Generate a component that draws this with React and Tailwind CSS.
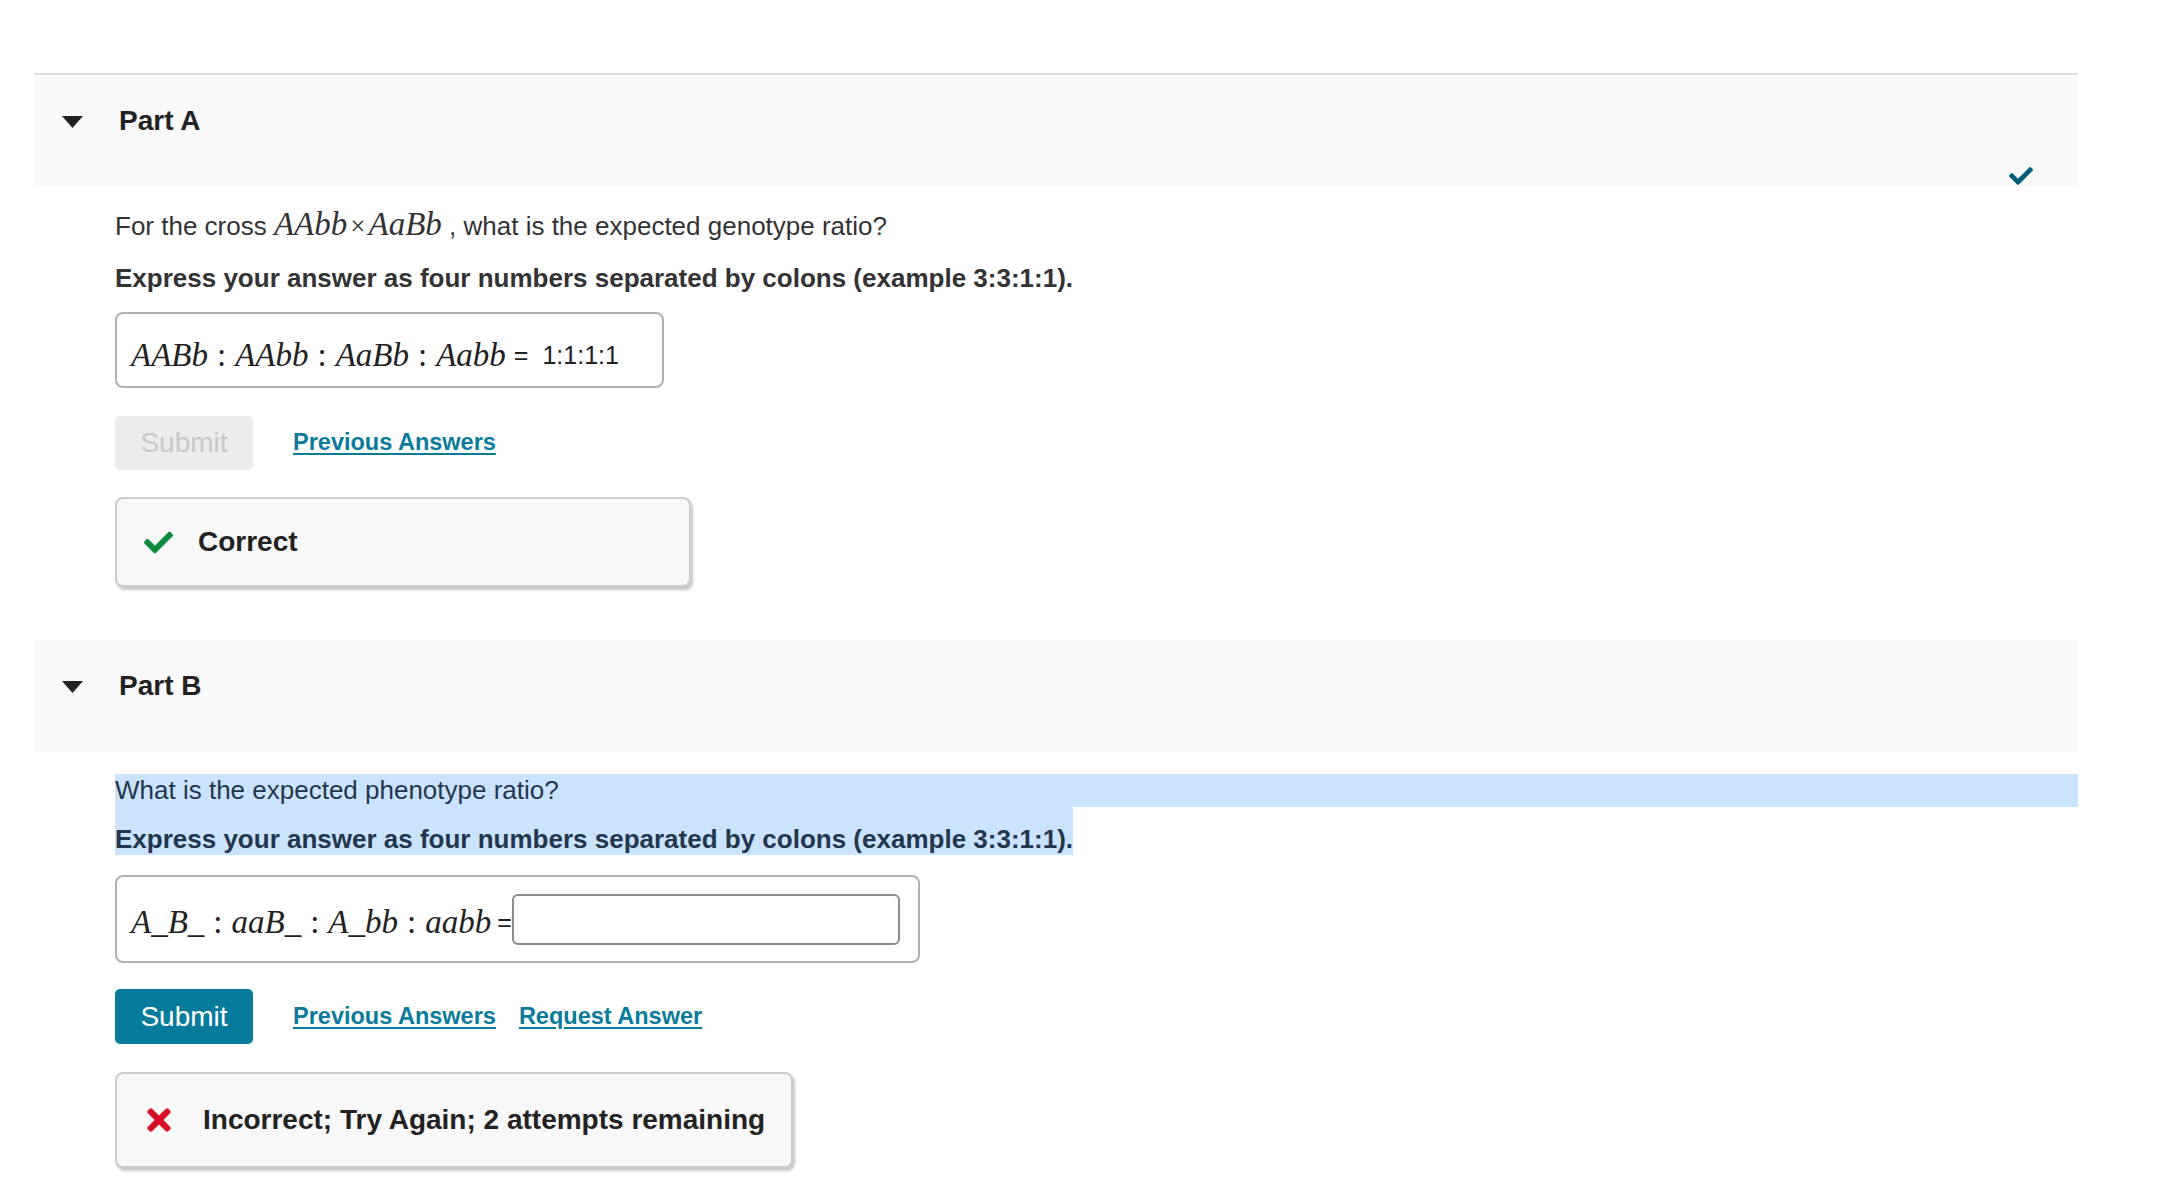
const CHECK_PATH =
  "M173.898 439.404l-166.4-166.4c-9.997-9.997-9.997-26.206 0-36.204l36.203-36.204c9.997-9.998 26.207-9.998 36.204 0L192 312.69 432.095 72.596c9.997-9.997 26.207-9.997 36.204 0l36.203 36.204c9.997 9.997 9.997 26.206 0 36.204l-294.4 294.401c-9.998 9.997-26.207 9.997-36.204-.001z"

const TIMES_PATH =
  "M242.72 256l100.07-100.07c12.28-12.28 12.28-32.19 0-44.48l-22.24-22.24c-12.28-12.28-32.19-12.28-44.48 0L176 189.28 75.930 89.21c-12.28-12.28-32.19-12.28-44.48 0L9.21 111.45c-12.28 12.28-12.28 32.19 0 44.48L109.28 256 9.21 356.07c-12.28 12.28-12.28 32.19 0 44.48l22.24 22.24c12.28 12.28 32.2 12.28 44.48 0L176 322.72l100.07 100.07c12.28 12.28 32.2 12.28 44.48 0l22.24-22.24c12.28-12.28 12.28-32.19 0-44.48L242.72 256z"

const Check = ({ className }) => (
  <svg viewBox="0 0 512 512" className={className} fill="currentColor">
    <path d={CHECK_PATH} />
  </svg>
)

const Caret = () => (
  <svg width="21" height="12" viewBox="0 0 21 12" className="text-[#222]">
    <polygon points="0,0 21,0 10.5,12" fill="currentColor" />
  </svg>
)

// math set in an italic serif, like the rendered TeX in the original
const M = ({ children }) => (
  <span className="font-['Liberation_Serif',serif] italic text-[33px]">{children}</span>
)

const Colon = () => <span className="font-['Liberation_Serif',serif] text-[33px] px-[9px]">:</span>

const PartHeader = ({ title, done }) => (
  <div className="relative h-[112px] bg-[#f9f9f9] flex items-start pt-[29px]">
    <div className="w-[85px] pl-[28px] pt-[12px]">
      <Caret />
    </div>
    <h2 className="text-[28px] leading-[34px] font-bold text-[#222]">{title}</h2>
    {done && <Check className="absolute -bottom-px right-[45px] w-[24px] h-[24px] text-[#005d78]" />}
  </div>
)

const LinkText = ({ children }) => (
  <a href="#" className="text-[23.5px] font-bold text-[#0a7b9b] underline underline-offset-[3px] decoration-2">
    {children}
  </a>
)

export default function App() {
  return (
    <div className="min-h-screen bg-white font-['Liberation_Sans',Arial,sans-serif] text-[#333]">
      <div className="pt-[73px] pl-[34px] w-[2078px]">
        <div className="border-t-2 border-[#dedede]">
          <PartHeader title="Part A" done />
        </div>

        <div className="ml-[81px]">
          <p className="mt-[19px] text-[26px] leading-[36px]">
            For the cross <M>AAbb</M>
            <span className="font-['Liberation_Serif',serif] text-[27px] px-[3px]">×</span>
            <M>AaBb</M> , what is the expected genotype ratio?
          </p>
          <p className="mt-[16px] text-[26px] leading-[36px] font-bold">
            Express your answer as four numbers separated by colons (example 3:3:1:1).
          </p>

          <div className="mt-[16px] w-[549px] h-[76px] border-2 border-[#b0b0b0] rounded-[8px] flex items-center pl-[14px] pt-[12px] text-[#222]">
            <M>AABb</M>
            <Colon />
            <M>AAbb</M>
            <Colon />
            <M>AaBb</M>
            <Colon />
            <M>Aabb</M>
            <span className="text-[25px] pl-[8px]">=</span>
            <span className="text-[25px] pl-[14px]">1:1:1:1</span>
          </div>

          <div className="mt-[28px] flex items-center gap-[40px]">
            <button disabled className="w-[138px] h-[54px] rounded-[5px] bg-[#ececec] text-[#c9c9c9] text-[28px]">
              Submit
            </button>
            <LinkText>Previous Answers</LinkText>
          </div>

          <div className="mt-[27px] w-[576px] h-[90px] border-2 border-[#cccccc] rounded-[8px] bg-[#f8f8f8] shadow-[2px_3px_3px_rgba(0,0,0,0.22)] flex items-center pl-[27px]">
            <Check className="w-[29px] h-[29px] text-[#0a8a3c]" />
            <span className="ml-[25px] text-[28px] font-bold text-[#222]">Correct</span>
          </div>
        </div>

        <div className="mt-[53px]">
          <PartHeader title="Part B" />
        </div>

        <div className="ml-[81px]">
          <div className="mt-[22px]">
            <p className="bg-[#cce3fd] h-[33px] text-[26px] leading-[33px] text-[#24364d]">
              What is the expected phenotype ratio?
            </p>
            <p className="inline-block bg-[#cce3fd] pt-[16px] text-[26px] leading-[32px] font-bold text-[#24364d]">
              Express your answer as four numbers separated by colons (example 3:3:1:1).
            </p>
          </div>

          <div className="mt-[20px] w-[805px] h-[88px] border-2 border-[#b0b0b0] rounded-[8px] flex items-center pl-[14px] pr-[18px] text-[#222]">
            <div className="pt-[8px] flex items-center">
              <M>A_B_</M>
              <Colon />
              <M>aaB_</M>
              <Colon />
              <M>A_bb</M>
              <Colon />
              <M>aabb</M>
              <span className="text-[25px] pl-[6px]">=</span>
            </div>
            <input
              type="text"
              className="ml-auto w-[393px] h-[51px] border-2 border-[#8c8c8c] rounded-[6px] bg-white outline-none"
            />
          </div>

          <div className="mt-[26px] flex items-center">
            <button className="w-[138px] h-[55px] rounded-[5px] bg-[#077b9c] text-white text-[28px]">Submit</button>
            <span className="ml-[40px]">
              <LinkText>Previous Answers</LinkText>
            </span>
            <span className="ml-[23px]">
              <LinkText>Request Answer</LinkText>
            </span>
          </div>

          <div className="mt-[28px] w-[678px] h-[96px] border-2 border-[#cccccc] rounded-[8px] bg-[#f8f8f8] shadow-[2px_3px_3px_rgba(0,0,0,0.22)] flex items-center pl-[28px]">
            <svg viewBox="0 0 352 512" className="w-[28px] h-[34px] text-[#d50f25]" fill="currentColor">
              <path d={TIMES_PATH} />
            </svg>
            <span className="ml-[30px] text-[28px] font-bold text-[#222]">Incorrect; Try Again; 2 attempts remaining</span>
          </div>
        </div>
      </div>
    </div>
  )
}
